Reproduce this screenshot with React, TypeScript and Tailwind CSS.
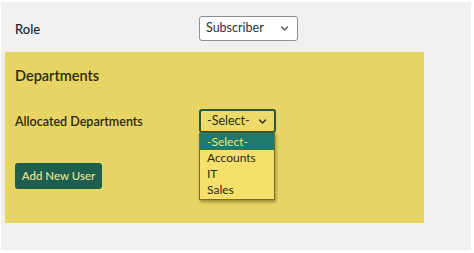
import React from "react";

const Chevron = ({ className }: { className?: string }) => (
  <svg viewBox="0 0 12 8" className={className} fill="none">
    <polyline points="2,2 6,6 10,2" stroke="currentColor" strokeWidth="1.8" strokeLinecap="round" strokeLinejoin="round" />
  </svg>
);

export default function App() {
  const options = ["Accounts", "IT", "Sales"];
  return (
    <div className="w-[474px] h-[253px] bg-white overflow-hidden" style={{ fontFamily: 'Lato, "Noto Sans", sans-serif' }}>
      <div className="w-[470px] h-[248px] mt-[2px] ml-[1px] bg-[#f0f0f1] pt-[14px]">
        {/* role row */}
        <div className="flex items-center h-[25px]">
          <div className="w-[198px] pl-[14px] text-[13px] font-medium text-[#1d2327] pt-[2px]">Role</div>
          <div className="w-[99px] h-[25px] border border-[#8c8f94] rounded-[3px] bg-white flex items-center justify-between pl-[6px] pr-[8px] text-[12.5px] text-[#2c3338]">
            <span>Subscriber</span>
            <Chevron className="w-[9px] h-[7px] text-[#50575e]" />
          </div>
        </div>

        {/* departments panel */}
        <div className="ml-[4px] mt-[11px] w-[419px] h-[171px] bg-[#e6d464] pl-[10px] pt-[13px] text-[#2b2a12]">
          <h2 className="text-[14.5px] font-semibold leading-[22px]">Departments</h2>

          <div className="flex items-center mt-[22px]">
            <div className="w-[184px] text-[12.5px] font-semibold pt-[3px]">Allocated Departments</div>
            <div className="relative">
              <div className="w-[77px] h-[24px] border-2 border-[#285a35] rounded-[3px] bg-[#eddb69] flex items-center justify-between pl-[6px] pr-[7px] text-[12.5px] text-[#2b2a12]">
                <span>-Select-</span>
                <Chevron className="w-[9px] h-[7px] text-[#2b2a12]" />
              </div>
              <div className="absolute left-0 top-[24px] w-[76px] bg-[#f6e06c] border border-[#7d6c23] shadow-[1px_2px_3px_rgba(60,50,0,0.45)] text-[12px] leading-[16px] z-10 pb-[1px]">
                <div className="bg-[#1e7b6b] text-[#f6e06c] pl-[7px] h-[16px] leading-[16px]">-Select-</div>
                {options.map((o) => (
                  <div key={o} className="pl-[7px] text-[#2b2a12]">{o}</div>
                ))}
              </div>
            </div>
          </div>

          <button className="mt-[30px] h-[26px] w-[87px] bg-[#1e5e4e] rounded-[3px] text-[11.5px] font-medium text-[#efe48c] flex items-center justify-center whitespace-nowrap">
            Add New User
          </button>
        </div>
      </div>
    </div>
  );
}
